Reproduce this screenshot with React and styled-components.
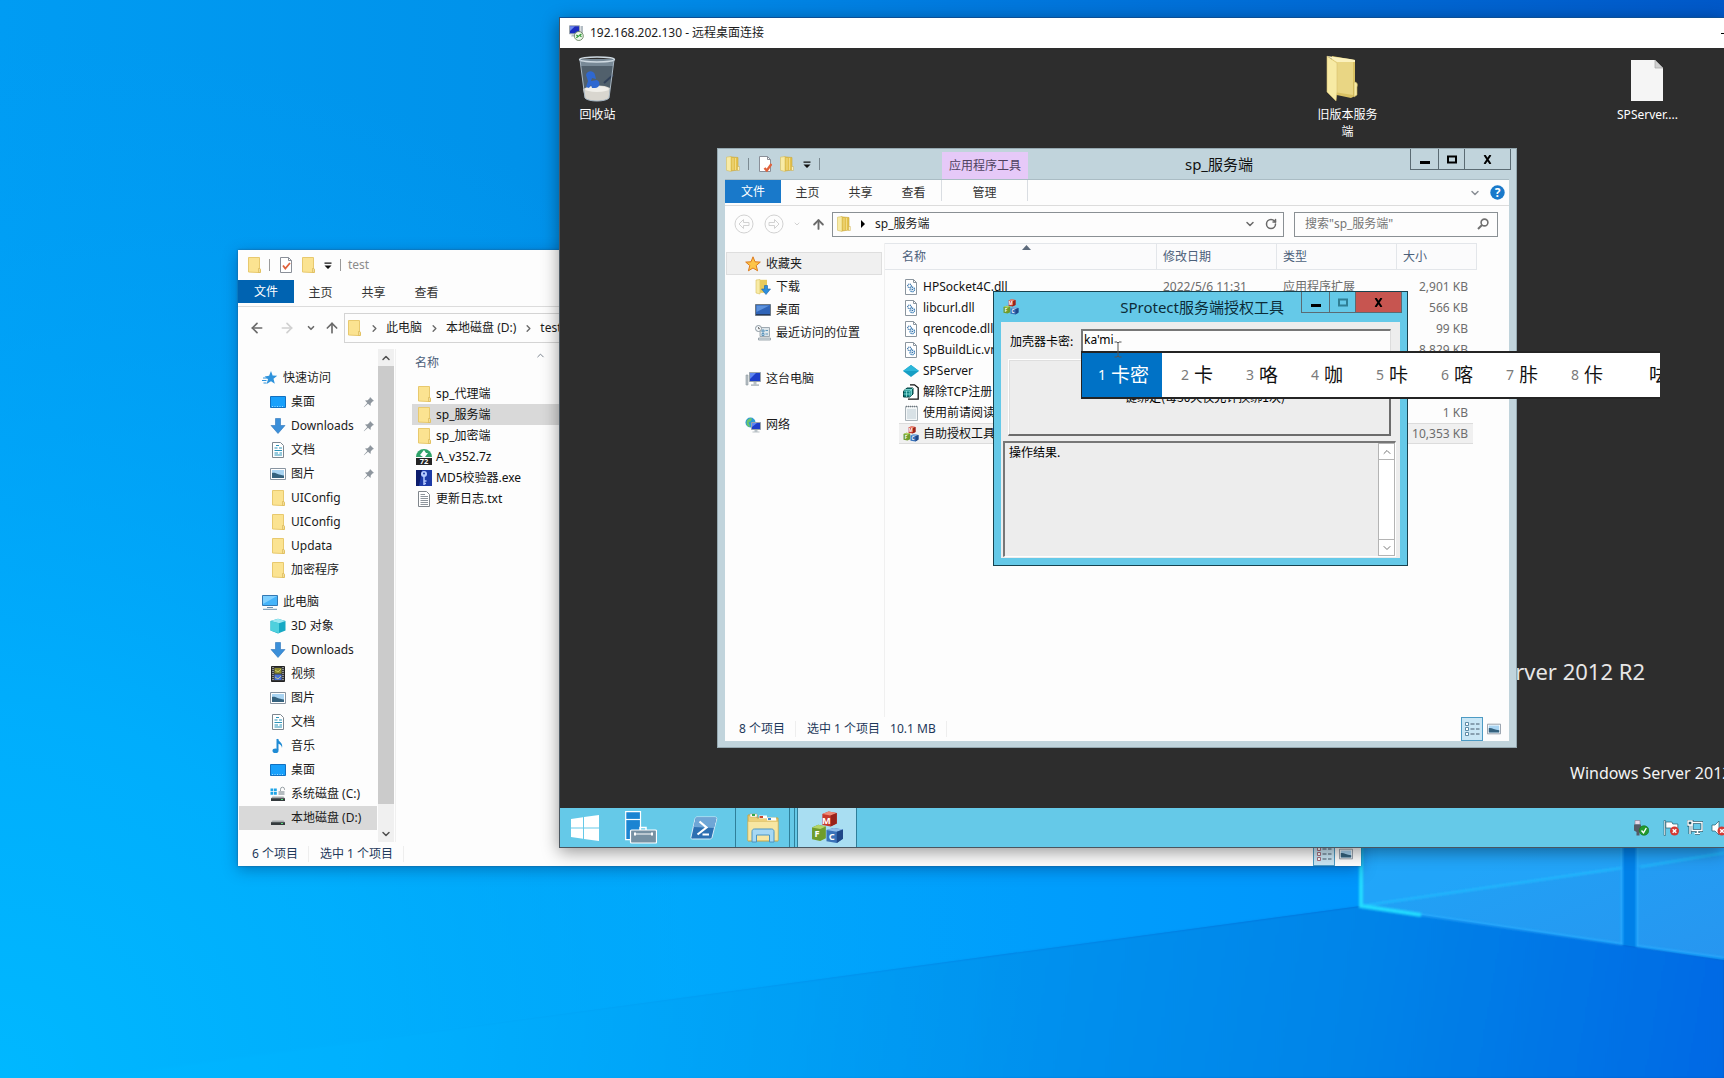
import React from 'react';
import styled, { createGlobalStyle } from 'styled-components';
import {
  ArrowLeft,
  ArrowRight,
  ArrowUp,
  ChevronDown,
  ChevronRight,
  ChevronUp,
  RotateCw,
} from 'lucide-react';

const GlobalStyle = createGlobalStyle`
  * {
    box-sizing: border-box;
  }
  body {
    margin: 0;
    overflow: hidden;
    font-family: 'Noto Sans', 'Noto Sans CJK SC', sans-serif;
    font-size: 12px;
    line-height: 16px;
    color: #1b1b1b;
  }
  button, input, textarea {
    font: inherit;
    color: inherit;
    margin: 0;
  }
  button {
    padding: 0;
    border: 0;
    background: none;
  }
  a {
    color: inherit;
    text-decoration: none;
  }
  svg {
    display: block;
    flex: none;
  }
`;

/* ---------- desktop ---------- */

const Desktop = styled.main`
  position: relative;
  height: 100vh;
  overflow: hidden;
  background: #0095f0;
`;

const WallpaperSvg = styled.svg`
  position: absolute;
  inset: 0;
  width: 100%;
  height: 100%;
`;

const LocalWindow = styled.section`
  position: absolute;
  left: 238px;
  top: 250px;
  width: 1123px;
  height: 616px;
  display: flex;
  flex-direction: column;
  background: #fdfdfd;
  box-shadow: 0 0 2px #1c5a8c, 0 4px 14px rgba(0, 30, 80, 0.35);
`;

const RemoteWindow = styled.section`
  position: absolute;
  left: 559px;
  right: 0;
  top: 17px;
  height: 831px;
  display: flex;
  flex-direction: column;
  border: 1px solid #4a5660;
  border-top-color: #0b4f96;
  border-right: 0;
  box-shadow: 0 4px 16px rgba(0, 0, 0, 0.4);
`;

const RemoteTitle = styled.header`
  display: flex;
  align-items: center;
  gap: 6px;
  height: 30px;
  padding-left: 8px;
  background: #fff;
  overflow: hidden;
`;

const Minimize = styled.button`
  margin-left: auto;
  width: 3px;
  height: 1px;
  background: #000;
`;

const RemoteDesktop = styled.div`
  position: relative;
  flex: 1;
  overflow: hidden;
  background: #2d2d2d;
`;

const IconGrid = styled.div`
  display: grid;
  grid-template-columns: repeat(auto-fill, 75px);
  padding-top: 7px;
`;

const DesktopItem = styled.a`
  grid-column: ${(p) => p.$col};
  display: flex;
  flex-direction: column;
  align-items: center;
  gap: 3px;
  padding: 0 4px;
  color: #fff;
  line-height: 17px;
  text-align: center;
`;

const Brand = styled.div`
  position: absolute;
  right: 79px;
  top: 607px;
  font-size: 22px;
  line-height: 32px;
  color: #e6e6e6;
  white-space: nowrap;
`;

const Edition = styled.div`
  position: absolute;
  left: 1010px;
  top: 714px;
  font-size: 16px;
  line-height: 22px;
  color: #f4f4f4;
  white-space: nowrap;
`;

/* ---------- explorer parts ---------- */

const ServerWindow = styled.section`
  position: absolute;
  left: 157px;
  top: 100px;
  width: 800px;
  height: 600px;
  display: flex;
  flex-direction: column;
  border: 1px solid #95a8b0;
  background: #c1d4dc;
`;

const WindowBody = styled.div`
  flex: 1;
  min-height: 0;
  display: flex;
  flex-direction: column;
  margin: 0 7px 6px;
  background: #fdfdfd;
`;

const TitleBar = styled.header`
  display: flex;
  align-items: center;
  height: 30px;
  padding: ${(p) => p.$pad || '0 5px 0 7px'};
`;

const QuickAccess = styled.div`
  display: flex;
  align-items: center;
  gap: 7px;
  width: ${(p) => p.$w || 'auto'};
  color: #8c8c8c;
`;

const Divider = styled.i`
  width: 1px;
  height: ${(p) => p.$h || 12}px;
  background: ${(p) => p.$c || '#9a9a9a'};
`;

const ContextTab = styled.div`
  align-self: flex-end;
  width: 86px;
  padding: 6px 0 5px;
  text-align: center;
  background: #e6c9f8;
  color: #4f4260;
`;

const WindowName = styled.h1`
  flex: 1;
  margin: 0;
  padding-right: ${(p) => p.$pr || 0}px;
  font-size: 15px;
  font-weight: 400;
  line-height: 20px;
  text-align: ${(p) => p.$align || 'center'};
  color: ${(p) => p.$c || '#111'};
`;

const Caption = styled.div`
  align-self: flex-start;
  display: flex;
  border: 1px solid ${(p) => p.$c || '#5b6b73'};
  border-top: 0;
`;

const CaptionButton = styled.button`
  display: flex;
  align-items: center;
  justify-content: center;
  width: ${(p) => p.$w}px;
  height: 20px;
  background: ${(p) => p.$bg || 'transparent'};

  & + & {
    border-left: 1px solid ${(p) => p.$c || '#5b6b73'};
  }
`;

const Ribbon = styled.div`
  display: flex;
  height: 27px;
  border-bottom: 1px solid #dcdcdc;
  border-top: ${(p) => (p.$top ? '1px solid #aabcc4' : '0')};
  color: #333;
`;

const Tab = styled.button`
  width: ${(p) => p.$w || 53}px;
  height: 25px;
`;

const FileTab = styled(Tab)`
  width: 56px;
  height: 23px;
  color: #fff;
  background: ${(p) => p.$bg};
`;

const ContextRibbonTab = styled(Tab)`
  margin-left: 1px;
  border: solid #d9dde2;
  border-width: 0 1px;
  height: 21px;
  padding-top: 4px;
`;

const RibbonEnd = styled.div`
  display: flex;
  align-items: center;
  gap: 9px;
  margin-left: auto;
  padding-right: 4px;
  color: #8b9096;
`;

const AddressRow = styled.div`
  display: flex;
  align-items: center;
  height: ${(p) => p.$h}px;
  padding: ${(p) => p.$pad};
`;

const NavButton = styled.button`
  display: flex;
  align-items: center;
  justify-content: center;
  width: ${(p) => p.$w}px;
  height: 24px;
  flex: none;
  color: ${(p) => p.$c || '#6a6a6a'};
`;

const AddressBox = styled.div`
  flex: 1;
  display: flex;
  align-items: center;
  height: ${(p) => p.$h}px;
  padding-left: ${(p) => p.$pl}px;
  padding-right: 4px;
  border: 1px solid ${(p) => p.$c};
  white-space: nowrap;
`;

const CrumbSep = styled.span`
  display: flex;
  justify-content: center;
  width: 24px;
  color: #6a6a6a;
`;

const BoxEnd = styled.div`
  display: flex;
  align-items: center;
  gap: 9px;
  margin-left: auto;
  padding-right: 2px;
  color: #6a6a6a;
`;

const SearchBox = styled.label`
  display: flex;
  align-items: center;
  width: 204px;
  height: 25px;
  margin-left: 10px;
  padding: 0 8px 0 10px;
  border: 1px solid #8a9094;
`;

const SearchInput = styled.input`
  flex: 1;
  min-width: 0;
  padding: 0;
  border: 0;
  outline: 0;
  background: transparent;

  &::placeholder {
    color: #757575;
    opacity: 1;
  }
`;

const Panes = styled.div`
  flex: 1;
  min-height: 0;
  display: flex;
`;

const LocalNav = styled.nav`
  width: 140px;
  padding: 17px 1px 0;
  overflow: hidden;
`;

const ServerNav = styled.nav`
  width: 160px;
  padding: 9px 2px 0 1px;
  border-right: 1px solid #f0f0f0;
`;

const NavGroup = styled.div`
  margin-bottom: ${(p) => p.$gap || 0}px;
`;

const NavItem = styled.a`
  display: flex;
  align-items: center;
  gap: 5px;
  height: ${(p) => p.$h}px;
  padding-left: ${(p) => p.$indent}px;
  padding-right: 2px;
  white-space: nowrap;
  background: ${(p) => p.$bg || 'transparent'};
  border: ${(p) => (p.$framed ? '1px solid #dedede' : '0')};

  > svg:last-child:not(:first-child) {
    margin-left: auto;
  }
`;

const Scrollbar = styled.div`
  display: flex;
  flex-direction: column;
  width: 16px;
  background: #f0f0f0;
`;

const ScrollButton = styled.button`
  display: flex;
  align-items: center;
  justify-content: center;
  height: 17px;
  color: #505050;
`;

const Thumb = styled.div`
  flex: 1;
  margin-bottom: 21px;
  background: #cbcbcb;
`;

const FileArea = styled.div`
  flex: 1;
  margin-left: ${(p) => p.$ml || 0}px;
  border-left: ${(p) => (p.$line ? '1px solid #f0f0f0' : '0')};
`;

const FileTable = styled.table`
  table-layout: fixed;
  width: ${(p) => p.$w}px;
  border-spacing: 0;

  tbody::before {
    content: '';
    display: block;
    height: 6px;
  }
`;

const Th = styled.th`
  position: relative;
  height: ${(p) => p.$h || 27}px;
  padding: 0 6px 0 ${(p) => (p.$first ? 3 : 6)}px;
  font-weight: 400;
  text-align: left;
  color: #4c607a;
  background: ${(p) => (p.$flat ? 'transparent' : '#fbfbfc')};
  border: solid #e3e6ea;
  border-width: ${(p) => (p.$flat ? '0' : p.$line ? '1px 1px 1px 0' : '1px 0')};
`;

const SortMark = styled.span`
  position: absolute;
  top: 1px;
  left: 123px;
  color: #6f7884;
`;

const Td = styled.td`
  height: 21px;
  padding: 0 6px;
  white-space: nowrap;
  color: #6d6d6d;
  text-align: ${(p) => p.$align || 'left'};
`;

const SizeTd = styled(Td)`
  padding-right: 5px;
  text-align: right;
`;

const Row = styled.tr`
  td:not(:first-child):not(:last-child) {
    background: ${(p) => p.$bg || 'transparent'};
    box-shadow: ${(p) => (p.$framed ? 'inset 0 1px #dcdcdc, inset 0 -1px #dcdcdc' : 'none')};
  }
`;

const FileLink = styled.a`
  display: flex;
  align-items: center;
  gap: 4px;
  margin-left: -2px;
  color: #111;
`;

const StatusBar = styled.footer`
  display: flex;
  align-items: center;
  height: 24px;
  padding-left: 14px;
  color: #1e395b;
`;

const StatusText = styled.span`
  padding-right: 10px;
  margin-right: ${(p) => (p.$plain ? 0 : 11)}px;
  border-right: ${(p) => (p.$plain ? '0' : '1px solid #eeeeee')};
`;

const ViewButtons = styled.div`
  display: flex;
  align-self: stretch;
  align-items: center;
  margin-left: auto;
  padding-right: 4px;
`;

const ViewButton = styled.button`
  display: flex;
  align-items: center;
  justify-content: center;
  width: 22px;
  height: 24px;
  border: ${(p) => (p.$on ? '1px solid #4d9bc4' : '0')};
  background: ${(p) => (p.$on ? '#c9e6f5' : 'transparent')};
`;

/* ---------- licence dialog ---------- */

const Dialog = styled.section`
  position: absolute;
  left: 433px;
  top: 243px;
  width: 415px;
  height: 275px;
  display: flex;
  flex-direction: column;
  border: 1px solid #17424f;
  background: #65c9e8;
`;

const DialogBody = styled.form`
  flex: 1;
  display: flex;
  flex-direction: column;
  margin: 0 7px 7px;
  background: #ededed;
  font-family: 'Noto Sans CJK SC', sans-serif;
  color: #000;
`;

const Fields = styled.div`
  display: flex;
  flex-direction: column;
  gap: 7px;
  padding: 7px 9px 0 7px;
`;

const Field = styled.label`
  display: flex;
  align-items: center;
  gap: 6px;
  padding-left: 2px;

  span {
    width: 65px;
  }
`;

const KeyInput = styled.input`
  flex: 1;
  min-width: 0;
  height: 23px;
  padding: 0 2px 4px 1px;
  border: 1px solid #777;
  border-width: 2px 1px 1px 2px;
  border-right-color: #dcdcdc;
  border-radius: 0;
  outline: 0;
  background: #fdfdfd;
  font-family: 'Noto Sans', sans-serif;
  text-decoration: underline dashed 1px;
  text-underline-offset: 4px;
`;

const BindButton = styled.button`
  height: 77px;
  padding-left: 12px;
  border: 1px solid #fff;
  border-right: 2px solid #6c6c6c;
  border-bottom: 2px solid #6c6c6c;
  box-shadow: inset 1px 1px #dedede;
`;

const Result = styled.div`
  flex: 1;
  display: flex;
  margin: 5px 4px 1px 2px;
  border: 1px solid #fff;
  border-top: 2px solid #777;
  border-left: 2px solid #777;
`;

const ResultText = styled.textarea`
  flex: 1;
  min-width: 0;
  padding: 1px 4px;
  border: 0;
  outline: 0;
  resize: none;
  overflow: hidden;
  background: transparent;
`;

const ResultScroll = styled.div`
  display: flex;
  flex-direction: column;
  justify-content: space-between;
  width: 17px;
  border: 1px solid #b4b4b4;
  background: #fff;

  button {
    height: 16px;
    color: #777;
  }
  button:first-child {
    border-bottom: 1px solid #b4b4b4;
  }
  button:last-child {
    border-top: 1px solid #b4b4b4;
  }
`;

const Pointer = styled.svg`
  position: absolute;
  left: 554px;
  top: 293px;
`;

const Candidates = styled.div`
  position: absolute;
  left: 521px;
  top: 303px;
  width: 579px;
  height: 48px;
  display: flex;
  border: solid #242424;
  border-width: 2px 0 2px 1px;
  background: #fff;
  overflow: hidden;
`;

const Candidate = styled.button`
  flex: none;
  display: flex;
  align-items: center;
  gap: 5px;
  width: ${(p) => (p.$on ? 80 : 65)}px;
  padding-left: ${(p) => (p.$on ? 16 : 19)}px;
  font-size: 19px;
  line-height: 24px;
  color: ${(p) => (p.$on ? '#fff' : '#111')};
  background: ${(p) => (p.$on ? '#0072c6' : 'transparent')};
  white-space: nowrap;

  small {
    width: 8px;
    font-size: 14px;
    color: ${(p) => (p.$on ? '#fff' : '#7a7a7a')};
  }
`;

/* ---------- taskbar ---------- */

const Taskbar = styled.footer`
  display: flex;
  height: 39px;
  background: #65c9e8;
`;

const TaskButton = styled.button`
  display: flex;
  align-items: center;
  justify-content: center;
  width: ${(p) => p.$w}px;
  background: ${(p) => p.$bg || 'transparent'};
  border: solid #2f7f9a;
  border-width: ${(p) => (p.$open ? '0 1px' : '0')};
`;

const StackEdge = styled.i`
  width: 5px;
  margin-right: 2px;
  border-right: 1px solid #2f7f9a;
`;

const Tray = styled.div`
  display: flex;
  align-items: center;
  gap: 8px;
  width: 91px;
  margin-left: auto;
  overflow: hidden;

  svg:first-child {
    margin-right: 6px;
  }
`;

/* ---------- icons ---------- */

const Svg = ({ s = 16, children }) => (
  <svg width={s} height={s} viewBox="0 0 16 16" fill="none">
    {children}
  </svg>
);

const Folder = () => (
  <Svg>
    <path d="M2.500.5h11v11l1 1v3h-2.500l-9.500-.5z" fill="#fbe391" stroke="#e8c96e" />
    <path d="M12.500 11.500h1.500v4h-1.500z" fill="#fff3c4" stroke="#d9b54f" strokeWidth=".7" />
  </Svg>
);

const OldFolder = () => (
  <Svg>
    <path d="M5 .8 13 1.500v12.500l-7 1z" fill="#e3c14c" stroke="#c9a83c" strokeWidth=".6" />
    <path d="M1.500 1.200 6 .5v15l-4.500-1.200z" fill="#f8eba6" stroke="#d8bf5c" strokeWidth=".6" />
    <path d="M8 2v12M10.500 2v12" stroke="#f2dc86" />
    <path d="M12.500 10.500h1.800v4h-1.800z" fill="#fff5c8" stroke="#c9a83c" strokeWidth=".5" />
  </Svg>
);

const Properties = () => (
  <Svg>
    <path d="M3.500.5h8l3 3v12h-11z" fill="#fff" stroke="#8a8f98" />
    <path d="M11.500.5v3h3" stroke="#8a8f98" />
    <path d="m6 8.500 2.300 3L13 6" stroke="#e0623c" strokeWidth="1.800" />
  </Svg>
);

const OldProperties = () => (
  <Svg>
    <path d="M3.500.5h8l3 3v12h-11z" fill="#fff" stroke="#8a8f98" />
    <path d="M11.500.5v3h3" stroke="#8a8f98" />
    <path d="m8.500 12 2.300 2.500L15.500 8" stroke="#e0623c" strokeWidth="2.400" />
  </Svg>
);

const QuickArrow = () => (
  <svg width="10" height="16" viewBox="0 0 10 16">
    <path d="M1.500 5.500h7v1.200h-7zM1.500 8.500h7L5 12z" fill="#111" />
  </svg>
);

const PinIcon = () => (
  <svg width="12" height="12" viewBox="0 0 12 12">
    <path d="m7 1 4 4-1.200.3-2 2L7.500 10 5 7.700 1 11.200.8 11l3.500-4L2 4.500l2.700-.3 2-2z" fill="#8e969e" />
  </svg>
);

const QuickStar = () => (
  <Svg>
    <path d="m9 1 1.600 4.600 4.600.2-3.700 3 1.300 5L9 11.200 4.600 14l1.400-4.800L2.600 6.400l4.500-.6z" fill="#2f93dc" />
    <path d="M1 8h4M0 10.500h4.500M1.500 13h3" stroke="#2f93dc" />
  </Svg>
);

const DesktopIcon = () => (
  <Svg>
    <path d="M.5 2.500h15v11H.5z" fill="#18a0fb" stroke="#1270c0" />
    <path d="M2 12.500h12" stroke="#9bd8ff" strokeDasharray="1 1.500" />
  </Svg>
);

const OldDesktop = () => (
  <Svg>
    <path d="M.5 2.500h15v11H.5z" fill="#2f64b8" stroke="#6d7884" />
    <path d="M1.500 3.500h13L1.500 10z" fill="#5d92dc" />
    <path d="M1 12.500h14" stroke="#243a5e" />
  </Svg>
);

const DownIcon = () => (
  <Svg>
    <path d="M5.500.5h5v7H15L8 15.500 1 7.500h4.500z" fill="#3b8fd9" stroke="#2b74ba" strokeWidth=".6" />
  </Svg>
);

const DocIcon = () => (
  <Svg>
    <path d="M2.500.5h8l3 3v12h-11z" fill="#fff" stroke="#7d8790" />
    <path d="M4.500 6h3M9 6h3M4.500 8.500h7.500M4.500 11H8M9.500 11H12M4.500 13h7.500M6 3.500h3" stroke="#2c93b8" />
  </Svg>
);

const PictureIcon = () => (
  <Svg>
    <path d="M.5 2.500h15v11H.5z" fill="#fff" stroke="#8894a0" />
    <path d="M2 4h12v8H2z" fill="#a9d4f2" />
    <path d="M2 7c3-1 6 2 12 2.500V12H2z" fill="#35627e" />
  </Svg>
);

const PcIcon = () => (
  <Svg>
    <path d="M.5 1.500h15v10H.5z" fill="#45b4fa" stroke="#3379b4" />
    <path d="m1 2 14 0L1 10z" fill="#7fd0ff" />
    <path d="M5 13.500h6M1 15.300h14" stroke="#6b90ae" />
  </Svg>
);

const CubeIcon = () => (
  <Svg>
    <path d="M8 .8 15.500 3v9.500L8 15.500.5 12.500V3z" fill="#17a9c4" />
    <path d="M8 .8 15.500 3 9 5.200.5 3z" fill="#9be8f2" />
    <path d="M.5 3 9 5.200v10L.5 12.500z" fill="#4fd0dd" />
  </Svg>
);

const VideoIcon = () => (
  <Svg>
    <path d="M1.500.5h13v15h-13z" fill="#36383c" stroke="#222" />
    <path d="M3 1v14M13 1v14" stroke="#e8e8e8" strokeDasharray="1 1" />
    <path d="M4.500 2h7v5.500h-7z" fill="#8c8a30" />
    <path d="M4.500 8.500h7V14h-7z" fill="#4a72d8" />
    <path d="m5 4 3 2 3-3M5 11l3 2 3-3" stroke="#d9dc7a" strokeWidth=".8" />
  </Svg>
);

const MusicIcon = () => (
  <Svg>
    <path d="M7.500 1v11" stroke="#1f8bd4" strokeWidth="2" />
    <ellipse cx="5.500" cy="12.800" rx="3" ry="2.300" fill="#1f8bd4" />
    <path d="M7.500.5c1 3.500 6 4 4.500 9.500-.2-2.500-2-4-4.500-4.500z" fill="#1f8bd4" />
  </Svg>
);

const DriveIcon = ({ system }) => (
  <Svg>
    <path d="M2.500 10.500h11l1.500 2H1z" fill="#a6abae" />
    <path d="M1 12.200h14V15H1z" fill="#343a3d" />
    <path d="M11 13.500h2" stroke="#58e07c" />
    {system && (
      <>
        <path d="M.5 2.500h2.800v2.800H.5zM4 2.500h2.800v2.800H4zM.5 6h2.800v2.800H.5zM4 6h2.800v2.800H4z" fill="#1fa4e6" />
        <path d="M8.500 5h6v4h-6z" fill="#b5bcc0" />
        <path d="M10.500 5V3.200a2 2 0 0 1 4 0V4" stroke="#9aa2a6" />
      </>
    )}
  </Svg>
);

const SevenZip = () => (
  <Svg>
    <path d="M0 8a8 8 0 0 1 16 0z" fill="#2fa36a" />
    <path d="M0 9h16v7H0z" fill="#242424" />
    <path d="m4 6 4-5 2 3h2L9 8H7z" fill="#fff" />
    <text x="8" y="15.300" fontSize="7.500" fontWeight="700" textAnchor="middle" fill="#fff">72</text>
  </Svg>
);

const KeyIcon = () => (
  <Svg>
    <path d="M0 0h16v16H0z" fill="#1d3ba8" />
    <path d="M0 0h6l-3 16H0z" fill="#0c1c6c" />
    <circle cx="8" cy="4" r="3" fill="#b6cbff" />
    <circle cx="8" cy="3.500" r="1" fill="#1d3ba8" />
    <path d="M8 6v9M8 11h2.500M8 13.500h2" stroke="#b6cbff" strokeWidth="1.500" />
  </Svg>
);

const TextIcon = () => (
  <Svg>
    <path d="M2.500.5h8l3 3v12h-11z" fill="#fff" stroke="#80868c" />
    <path d="M4.500 3.500H9M4.500 5.500H12M4.500 7.500H12M4.500 9.500H12M4.500 11.500H12M4.500 13.500H12" stroke="#8e959c" />
  </Svg>
);

const NoteIcon = () => (
  <Svg>
    <path d="M2.500 1.500h12v14h-12z" fill="#f4f7f8" stroke="#a9b2b8" />
    <path d="M3 1.500h12" stroke="#6e767c" strokeWidth="1.500" strokeDasharray="1 1" />
    <path d="M4 5h9M4 7h9M4 9h9M4 11h9M4 13h9" stroke="#bccbd3" />
  </Svg>
);

const DllIcon = () => (
  <Svg>
    <path d="M2.500.5h8l3 3v12h-11z" fill="#fff" stroke="#8b959e" />
    <path d="M10.500.5v3h3" stroke="#8b959e" />
    <circle cx="6.500" cy="6.800" r="1.800" stroke="#2f6da6" strokeDasharray="1 .6" strokeWidth="1.200" />
    <circle cx="9.300" cy="10.500" r="2.200" stroke="#3f80b8" strokeDasharray="1.200 .6" strokeWidth="1.400" />
    <circle cx="9.300" cy="10.500" r=".8" fill="#2f6da6" />
  </Svg>
);

const DiamondIcon = () => (
  <Svg>
    <path d="M8 2 16 8 8 14 0 8z" fill="#169ec4" />
    <path d="M8 2 16 8H0z" fill="#2cb6d9" />
  </Svg>
);

const RegIcon = () => (
  <Svg>
    <path d="M7 .8h4.500l3.700 3v11.400H5" fill="#fff" stroke="#111" strokeWidth="1.300" />
    <path d="M.5 7 4 4h6v6l-3 3H.5z" fill="#0d7f7f" stroke="#063f3f" />
    <path d="M.5 7H7v6M7 7l3-3M3.500 7v6M.5 10H7M2 5.500h6.500v6" stroke="#9ff0ea" strokeWidth=".7" />
  </Svg>
);

const MfcIcon = ({ s = 16 }) => (
  <Svg s={s}>
    <path d="m5.500 1.500 3-1.200 4 .7v5L9.500 7.500l-4-.7z" fill="#c8392c" />
    <path d="m5.500 1.500 3-1.200 4 .7-3 1.200z" fill="#ee8a77" />
    <path d="m9.500 2.200 3-1.200v5l-3 1.500z" fill="#98231b" />
    <path d="m.5 8 3-1.300 3.700.8v5.700l-2.700 1.300-4-.8z" fill="#6f9c2c" />
    <path d="m.5 8 3-1.300 3.700.8-2.700 1.200z" fill="#b3d467" />
    <path d="m7.500 9.200 3.500-1 4.500.8v4.500l-3 2-5-.8z" fill="#3972b9" />
    <path d="m7.500 9.200 3.500-1 4.500.8-3 1z" fill="#90bdea" />
    <path d="m12.500 10 3-1v4.500l-3 2z" fill="#1e4788" />
    <g fill="#fff" fontWeight="700" fontSize="4.500" textAnchor="middle">
      <text x="7.500" y="6.300">M</text>
      <text x="2.900" y="12.700">F</text>
      <text x="10" y="14.300">C</text>
    </g>
  </Svg>
);

const StarIcon = () => (
  <Svg>
    <path d="m8 .8 2 5 5.300.3-4.100 3.400 1.400 5.300L8 12l-4.600 2.800 1.400-5.300L.7 6.100 6 5.800z" fill="#fdc549" stroke="#dc7a1e" />
  </Svg>
);

const DownloadFolder = () => (
  <Svg>
    <path d="M1 1 5 .5v14.500L1 14z" fill="#f8eba6" stroke="#d8bf5c" strokeWidth=".6" />
    <path d="M5 .8h7v13H5z" fill="#e8cb5c" />
    <path d="M9.500 6.500h3V10h3L11 15.500 6.500 10h3z" fill="#2c8fdd" stroke="#1a62a8" strokeWidth=".6" />
  </Svg>
);

const RecentIcon = () => (
  <Svg>
    <path d="M5 2.500h9.500v9H5zM3.500 13h12v2h-12z" fill="#dce5ea" stroke="#8b979f" strokeWidth=".8" />
    <path d="M7 5h2v2H7zM7 8.500h2v2H7zM10.500 5.500H13M10.500 9H13" stroke="#4385b4" strokeWidth=".8" />
    <circle cx="3.500" cy="3.500" r="3" fill="#f4f7f9" stroke="#8b979f" />
    <path d="M3.500 2v1.700H5" stroke="#555" strokeWidth=".8" />
  </Svg>
);

const OldPc = () => (
  <Svg>
    <path d="M1 4h2v10H1z" fill="#b9c1c6" stroke="#8b979f" strokeWidth=".6" />
    <path d="M4.500 1.500h11v9h-11z" fill="#1d3ec9" stroke="#9aa4ab" />
    <path d="M5 2h6L5 8z" fill="#5e86f2" />
    <path d="M8.500 11h3v2.500h-3zM6 13.300h8V15H6z" fill="#b9c1c6" />
  </Svg>
);

const NetworkIcon = () => (
  <Svg>
    <circle cx="5.500" cy="5.500" r="5" fill="#2b9ad6" />
    <path d="M2 3.500c2-2.500 4-2.500 5-2L6 4 3.500 5.500 5 9l-1 1.200C1.500 9 1 6 2 3.500z" fill="#6bc56a" />
    <path d="M6.500 5.500h9v7h-9z" fill="#1d3ec9" stroke="#9aa4ab" />
    <path d="M7 6h5l-5 4z" fill="#5e86f2" />
    <path d="M9.500 13h3v1.500h2v1h-7v-1h2z" fill="#b9c1c6" />
  </Svg>
);

const RdpIcon = () => (
  <Svg>
    <path d="M1.500.8h10v8h-10z" fill="#1c2cc0" stroke="#9ba4ae" />
    <path d="M2 1.300h5L2 6z" fill="#6b86ec" />
    <path d="M12.500 1h2.500v9h-2.500zM4 9.500h5v2H3z" fill="#b4bdc4" />
    <circle cx="10.800" cy="11" r="4.500" fill="#eef6ea" stroke="#5d7a55" strokeWidth=".8" />
    <path d="m8.300 10 2 1.300-2 1.400M13.500 9l-2 1.300 2 1.500" stroke="#2f9a35" strokeWidth="1.200" />
  </Svg>
);

const DetailsIcon = ({ c = '#4f7f9c' }) => (
  <Svg>
    <path d="M1.500 1.500h3v3h-3zM1.500 6.500h3v3h-3zM1.500 11.500h3v3h-3z" fill="#fff" stroke={c} strokeWidth=".9" />
    <path d="M6.500 3h4M12 3h3.500M6.500 8h4M12 8h3.500M6.500 13h4M12 13h3.500" stroke="#46586a" />
  </Svg>
);

const Wallpaper = () => (
  <WallpaperSvg viewBox="0 0 1724 1078" preserveAspectRatio="none" aria-hidden="true">
    <defs>
      <linearGradient id="base" x1="0" y1="0" x2="1" y2="0">
        <stop offset="0" stopColor="#009cf3" />
        <stop offset=".3" stopColor="#0092ea" />
        <stop offset=".55" stopColor="#007ade" />
        <stop offset="1" stopColor="#0058c8" />
      </linearGradient>
      <radialGradient id="glow" gradientUnits="userSpaceOnUse" cx="0" cy="1078" r="1050">
        <stop offset="0" stopColor="#00b8ff" />
        <stop offset=".35" stopColor="#00b2ff" stopOpacity=".8" />
        <stop offset="1" stopColor="#00a4fa" stopOpacity="0" />
      </radialGradient>
      <linearGradient id="beam" x1="0" y1="0" x2="1" y2="0">
        <stop offset="0" stopColor="#00aefa" stopOpacity="0" />
        <stop offset=".5" stopColor="#00a6fc" />
        <stop offset="1" stopColor="#0096fc" />
      </linearGradient>
      <linearGradient id="floor" gradientUnits="userSpaceOnUse" x1="200" y1="900" x2="1724" y2="1160">
        <stop offset="0" stopColor="#00b0fc" />
        <stop offset=".4" stopColor="#009af2" />
        <stop offset=".75" stopColor="#0084e8" />
        <stop offset="1" stopColor="#0068e4" />
      </linearGradient>
      <linearGradient id="pane" x1="0" y1="0" x2="1" y2="1">
        <stop offset="0" stopColor="#1ea6f8" />
        <stop offset="1" stopColor="#2796f0" />
      </linearGradient>
      <filter id="soft" x="-10%" y="-10%" width="120%" height="120%">
        <feGaussianBlur stdDeviation="1" />
      </filter>
    </defs>
    <path d="M0 0h1724v1078H0z" fill="url(#base)" />
    <path d="M0 800h1361v106L0 1090z" fill="url(#beam)" />
    <path d="M0 1090 1361 906l363 54v118H0z" fill="url(#floor)" filter="url(#soft)" />
    <path d="M0 0h1724v1078H0z" fill="url(#glow)" />
    <path d="M1361 800h363v160l-363-54z" fill="#0080e8" />
    <path d="M1361 800h261v144l-261-38zM1637 800h87v158l-87-12z" fill="url(#pane)" />
    <path d="M1361 800h261v68l-261 38zM1637 800h87v53l-87 14z" fill="#22acff" opacity=".4" />
    <g fill="none" filter="url(#soft)">
      <path d="m1361 906 261-38M1640 867l84-14" stroke="#22bcff" strokeWidth="2" />
      <path d="m1361 906 261 38v-150M1724 958l-87-12V800" stroke="#29acff" strokeWidth="2" />
      <path d="M1361 800v106l60 9" stroke="#24dcff" strokeWidth="4" />
    </g>
  </WallpaperSvg>
);

const captionGlyphs = (muted) => ({
  min: <svg width="10" height="10"><path d="M0 7h10v3H0z" fill="#000" /></svg>,
  max: (
    <svg width="10" height="9">
      <path d="M1 1.500h8v6H1z" fill="none" stroke={muted ? '#2f7f95' : '#000'} strokeWidth="2" />
    </svg>
  ),
  close: (
    <svg width="9" height="9">
      <path d="m1.500 0 6 9M7.500 0l-6 9" stroke="#000" strokeWidth="2" />
    </svg>
  ),
});

const CaptionButtons = ({ muted, closeBg }) => {
  const glyph = captionGlyphs(muted);
  return (
    <Caption>
      <CaptionButton $w={27} aria-label="最小化">{glyph.min}</CaptionButton>
      <CaptionButton $w={26} aria-label="最大化">{glyph.max}</CaptionButton>
      <CaptionButton $w={46} $bg={closeBg} aria-label="关闭">{glyph.close}</CaptionButton>
    </Caption>
  );
};

/* ---------- data ---------- */

const quickAccess = [
  ['桌面', DesktopIcon, true],
  ['Downloads', DownIcon, true],
  ['文档', DocIcon, true],
  ['图片', PictureIcon, true],
  ['UIConfig', Folder],
  ['UIConfig', Folder],
  ['Updata', Folder],
  ['加密程序', Folder],
];

const thisPc = [
  ['3D 对象', CubeIcon],
  ['Downloads', DownIcon],
  ['视频', VideoIcon],
  ['图片', PictureIcon],
  ['文档', DocIcon],
  ['音乐', MusicIcon],
  ['桌面', DesktopIcon],
];

const localFiles = [
  ['sp_代理端', Folder],
  ['sp_服务端', Folder, true],
  ['sp_加密端', Folder],
  ['A_v352.7z', SevenZip],
  ['MD5校验器.exe', KeyIcon],
  ['更新日志.txt', TextIcon],
];

const serverFiles = [
  { name: 'HPSocket4C.dll', icon: DllIcon, date: '2022/5/6 11:31', type: '应用程序扩展', size: '2,901 KB' },
  { name: 'libcurl.dll', icon: DllIcon, size: '566 KB' },
  { name: 'qrencode.dll', icon: DllIcon, size: '99 KB' },
  { name: 'SpBuildLic.vmp', icon: DllIcon, size: '8,829 KB' },
  { name: 'SPServer', icon: DiamondIcon },
  { name: '解除TCP注册', icon: RegIcon },
  { name: '使用前请阅读', icon: NoteIcon, size: '1 KB' },
  { name: '自助授权工具', icon: MfcIcon, size: '10,353 KB', selected: true },
];

const candidates = ['卡密', '卡', '咯', '咖', '咔', '喀', '胩', '佧'];

/* ---------- windows ---------- */

const LocalExplorer = () => (
  <LocalWindow>
    <TitleBar $pad="0 8px">
      <QuickAccess>
        <Folder />
        <Divider />
        <Properties />
        <Folder />
        <QuickArrow />
        <Divider />
        <span>test</span>
      </QuickAccess>
    </TitleBar>
    <Ribbon>
      <FileTab $bg="#0063b1">文件</FileTab>
      <Tab>主页</Tab>
      <Tab>共享</Tab>
      <Tab>查看</Tab>
    </Ribbon>
    <AddressRow $h={42} $pad="0 12px 0 4px">
      <NavButton $w={30} aria-label="后退"><ArrowLeft size={16} strokeWidth={2.5} /></NavButton>
      <NavButton $w={30} $c="#d0d0d0" aria-label="前进"><ArrowRight size={16} strokeWidth={2.5} /></NavButton>
      <NavButton $w={18} aria-label="最近"><ChevronDown size={10} strokeWidth={4} /></NavButton>
      <NavButton $w={24} aria-label="上移"><ArrowUp size={16} strokeWidth={2.5} /></NavButton>
      <AddressBox $h={30} $c="#d4d4d4" $pl={1}>
        <Folder />
        <CrumbSep><ChevronRight size={11} strokeWidth={3} /></CrumbSep>
        <span>此电脑</span>
        <CrumbSep><ChevronRight size={11} strokeWidth={3} /></CrumbSep>
        <span>本地磁盘 (D:)</span>
        <CrumbSep><ChevronRight size={11} strokeWidth={3} /></CrumbSep>
        <span>test</span>
      </AddressBox>
    </AddressRow>
    <Panes>
      <LocalNav>
        <NavGroup $gap={8}>
          <NavItem href="#" $h={24} $indent={23}><QuickStar />快速访问</NavItem>
          {quickAccess.map(([name, Icon, pinned], i) => (
            <NavItem href="#" key={i} $h={24} $indent={31}>
              <Icon />
              {name}
              {pinned && <PinIcon />}
            </NavItem>
          ))}
        </NavGroup>
        <NavGroup>
          <NavItem href="#" $h={24} $indent={23}><PcIcon />此电脑</NavItem>
          {thisPc.map(([name, Icon]) => (
            <NavItem href="#" key={name} $h={24} $indent={31}><Icon />{name}</NavItem>
          ))}
          <NavItem href="#" $h={24} $indent={31}><DriveIcon system />系统磁盘 (C:)</NavItem>
          <NavItem href="#" $h={24} $indent={31} $bg="#d9d9d9"><DriveIcon />本地磁盘 (D:)</NavItem>
        </NavGroup>
      </LocalNav>
      <Scrollbar>
        <ScrollButton aria-label="向上滚动"><ChevronUp size={12} strokeWidth={3} /></ScrollButton>
        <Thumb />
        <ScrollButton aria-label="向下滚动"><ChevronDown size={12} strokeWidth={3} /></ScrollButton>
      </Scrollbar>
      <FileArea $ml={1} $line>
        <FileTable $w={400}>
          <colgroup>
            <col width="16" />
            <col width="250" />
            <col />
          </colgroup>
          <thead>
            <tr>
              <Th $flat $h={28} />
              <Th $flat $first>
                名称
                <SortMark><ChevronUp size={11} strokeWidth={2} /></SortMark>
              </Th>
              <Th $flat />
            </tr>
          </thead>
          <tbody>
            {localFiles.map(([name, Icon, selected]) => (
              <Row key={name} $bg={selected && '#d9d9d9'}>
                <Td />
                <Td><FileLink href="#"><Icon />{name}</FileLink></Td>
                <Td />
              </Row>
            ))}
          </tbody>
        </FileTable>
      </FileArea>
    </Panes>
    <StatusBar>
      <StatusText>6 个项目</StatusText>
      <StatusText>选中 1 个项目</StatusText>
      <ViewButtons>
        <ViewButton $on aria-label="详细信息"><DetailsIcon c="#a06070" /></ViewButton>
        <ViewButton aria-label="大图标"><Svg s={14}><PictureIcon /></Svg></ViewButton>
      </ViewButtons>
    </StatusBar>
  </LocalWindow>
);

const ServerExplorer = () => (
  <ServerWindow>
    <TitleBar>
      <QuickAccess $w="217px">
        <OldFolder />
        <Divider $c="#7b8a92" />
        <OldProperties />
        <OldFolder />
        <QuickArrow />
        <Divider $c="#7b8a92" />
      </QuickAccess>
      <ContextTab>应用程序工具</ContextTab>
      <WindowName>sp_服务端</WindowName>
      <CaptionButtons />
    </TitleBar>
    <WindowBody>
      <Ribbon $top>
        <FileTab $bg="#1979ca">文件</FileTab>
        <Tab>主页</Tab>
        <Tab>共享</Tab>
        <Tab>查看</Tab>
        <ContextRibbonTab $w={87}>管理</ContextRibbonTab>
        <RibbonEnd>
          <ChevronDown size={12} strokeWidth={3} />
          <svg width="15" height="15" viewBox="0 0 15 15">
            <circle cx="7.500" cy="7.500" r="7.200" fill="#1979ca" />
            <text x="7.500" y="11.800" fontSize="12" fontWeight="700" textAnchor="middle" fill="#fff">?</text>
          </svg>
        </RibbonEnd>
      </Ribbon>
      <AddressRow $h={37} $pad="0 11px 1px 4px">
        <NavButton $w={30} $c="#d2d2d2" aria-label="后退">
          <svg width="20" height="20" viewBox="0 0 20 20" fill="none" stroke="currentColor">
            <circle cx="10" cy="10" r="9" />
            <path d="m9.500 5.500-4.500 4.500 4.500 4.500v-3H15v-3H9.500z" />
          </svg>
        </NavButton>
        <NavButton $w={30} $c="#d2d2d2" aria-label="前进">
          <svg width="20" height="20" viewBox="0 0 20 20" fill="none" stroke="currentColor">
            <circle cx="10" cy="10" r="9" />
            <path d="m10.500 5.500 4.500 4.500-4.500 4.500v-3H5v-3h5.500z" />
          </svg>
        </NavButton>
        <NavButton $w={16} $c="#d2d2d2" aria-label="最近"><ChevronDown size={8} strokeWidth={3} /></NavButton>
        <NavButton $w={27} aria-label="上移"><ArrowUp size={15} strokeWidth={3} /></NavButton>
        <AddressBox $h={25} $c="#8a9094" $pl={3}>
          <OldFolder />
          <svg width="23" height="10" viewBox="0 0 23 10"><path d="m9 1 4 4-4 4z" fill="#000" /></svg>
          <span>sp_服务端</span>
          <BoxEnd>
            <ChevronDown size={12} strokeWidth={3} />
            <RotateCw size={12} strokeWidth={3} />
          </BoxEnd>
        </AddressBox>
        <SearchBox>
          <SearchInput placeholder={'搜索"sp_服务端"'} aria-label="搜索" />
          <svg width="12" height="12" viewBox="0 0 12 12" fill="none" stroke="#707070" strokeWidth="1.600">
            <circle cx="7.500" cy="4.500" r="3.400" />
            <path d="M5 7 1 11" strokeWidth="2" />
          </svg>
        </SearchBox>
      </AddressRow>
      <Panes>
        <ServerNav>
          <NavGroup $gap={23}>
            <NavItem href="#" $h={23} $indent={18} $bg="#f0f0f0" $framed><StarIcon />收藏夹</NavItem>
            <NavItem href="#" $h={23} $indent={29}><DownloadFolder />下载</NavItem>
            <NavItem href="#" $h={23} $indent={29}><OldDesktop />桌面</NavItem>
            <NavItem href="#" $h={23} $indent={29}><RecentIcon />最近访问的位置</NavItem>
          </NavGroup>
          <NavGroup $gap={23}>
            <NavItem href="#" $h={23} $indent={19}><OldPc />这台电脑</NavItem>
          </NavGroup>
          <NavItem href="#" $h={23} $indent={19}><NetworkIcon />网络</NavItem>
        </ServerNav>
        <FileArea>
          <FileTable $w={592}>
            <colgroup>
              <col width="14" />
              <col width="258" />
              <col width="120" />
              <col width="120" />
              <col width="76" />
              <col width="4" />
            </colgroup>
            <thead>
              <tr>
                <Th />
                <Th $line $first>
                  名称
                  <SortMark>
                    <svg width="9" height="5"><path d="M0 5 4.500 0 9 5z" fill="#5d6b7c" /></svg>
                  </SortMark>
                </Th>
                <Th $line>修改日期</Th>
                <Th $line>类型</Th>
                <Th>大小</Th>
                <Th $line />
              </tr>
            </thead>
            <tbody>
              {serverFiles.map(({ name, icon: Icon, date, type, size, selected }) => (
                <Row key={name} $bg={selected && '#f0f0f0'} $framed={selected}>
                  <Td />
                  <Td><FileLink href="#"><Icon />{name}</FileLink></Td>
                  <Td>{date}</Td>
                  <Td>{type}</Td>
                  <SizeTd>{size}</SizeTd>
                  <Td />
                </Row>
              ))}
            </tbody>
          </FileTable>
        </FileArea>
      </Panes>
      <StatusBar>
        <StatusText>8 个项目</StatusText>
        <StatusText $plain>选中 1 个项目</StatusText>
        <StatusText>10.1 MB</StatusText>
        <ViewButtons>
          <ViewButton $on aria-label="详细信息"><DetailsIcon /></ViewButton>
          <ViewButton aria-label="大图标"><Svg s={14}><PictureIcon /></Svg></ViewButton>
        </ViewButtons>
      </StatusBar>
    </WindowBody>
  </ServerWindow>
);

const LicenseDialog = () => (
  <Dialog role="dialog" aria-label="SProtect服务端授权工具">
    <TitleBar $pad="0 5px 0 9px">
      <MfcIcon />
      <WindowName $c="#0c2c38" $align="right" $pr={17}>SProtect服务端授权工具</WindowName>
      <CaptionButtons muted closeBg="#c75550" />
    </TitleBar>
    <DialogBody onSubmit={(e) => e.preventDefault()}>
      <Fields>
        <Field>
          <span>加壳器卡密:</span>
          <KeyInput defaultValue="ka'mi" />
        </Field>
        <BindButton type="button">键绑定(每30天仅允许换绑1次)</BindButton>
      </Fields>
      <Result>
        <ResultText aria-label="操作结果" readOnly defaultValue="操作结果." />
        <ResultScroll>
          <ScrollButton type="button" aria-label="向上滚动"><ChevronUp size={12} /></ScrollButton>
          <ScrollButton type="button" aria-label="向下滚动"><ChevronDown size={12} /></ScrollButton>
        </ResultScroll>
      </Result>
    </DialogBody>
  </Dialog>
);

const RecycleBin = () => (
  <svg width="40" height="48" viewBox="1 0 40 48" fill="none">
    <path d="M3 4h34l-5 39c-1 4-23 4-24 0z" fill="#5d7182" opacity=".75" />
    <path d="M3 4h34l-1 7H4z" fill="#9fb2c0" opacity=".5" />
    <path d="M6 34c7-4 20-5 27-1l-1 10c-4 4-20 4-24 0z" fill="#d9d6cf" />
    <ellipse cx="20" cy="34" rx="12" ry="3" fill="#f1efea" />
    <path d="M9 20c1-5 8-5 9 0l1 4-4-1-1 3 6-1c4 2 3 8-2 8h-3l-1-3-2 3-3-1 2-6-1-3z" fill="#2f68d0" />
    <path d="m27 28 9-8" stroke="#31415a" strokeWidth="2" />
    <ellipse cx="20" cy="4.500" rx="17.500" ry="2.500" stroke="#cfdae2" strokeWidth="1.300" />
    <path d="m3 5 5 38c3 4 21 4 24 0l5-38" stroke="#a9b8c4" />
  </svg>
);

const BigFolder = () => (
  <svg width="44" height="48" viewBox="6 0 44 48">
    <path d="m12 1 23 4v36l-4 2-19-4z" fill="#d9c163" />
    <path d="m14 3 19 3v34l-19-3z" fill="#e9d684" />
    <path d="m7 1 10 7v29l-1 9L7 37z" fill="#f7eaa4" stroke="#d8c170" strokeWidth=".6" />
    <path d="m7 1 23 3 5 1v2L17 7z" fill="#fbf1bd" />
    <path d="M34 27c3 0 4 2 3 5v8l-3 2z" fill="#f7eaa4" stroke="#c4ac54" strokeWidth=".6" />
  </svg>
);

const BlankFile = () => (
  <svg width="34" height="48" viewBox="1 0 34 48">
    <path d="M1 5h24l8 8v33H1z" fill="#f5f5f5" />
    <path d="M25 5v8h8z" fill="#cfcfcf" stroke="#a4a4a4" strokeWidth=".7" />
  </svg>
);

const RemoteTaskbar = () => (
  <Taskbar>
    <TaskButton $w={50} aria-label="开始">
      <svg width="28" height="26" viewBox="0 0 28 26" fill="#fff">
        <path d="M0 4 12 2.200v10.300H0zM13 2l15-2v12.500H13zM0 13.500h12v10.300L0 22zM13 13.500h15V26l-15-2z" />
      </svg>
    </TaskButton>
    <TaskButton $w={62} aria-label="服务器管理器">
      <svg width="32" height="33" viewBox="0 0 32 33" fill="none" stroke="#fff">
        <path d="M.7.7h14.800v28H.7z" fill="#1b84d2" strokeWidth="1.200" />
        <path d="M1 8.500h14" strokeWidth="1.200" />
        <path d="M15 19v-2.500h6V19" strokeWidth="1.500" />
        <rect x="5.500" y="19" width="26" height="13" rx="1" fill="#7791a3" strokeWidth="1.200" />
        <path d="M9 23h19" />
        <path d="M9 21.500h2v3H9zM26 21.500h2v3h-2z" fill="#fff" stroke="none" />
      </svg>
    </TaskButton>
    <TaskButton $w={63} aria-label="PowerShell">
      <svg width="28" height="24" viewBox="0 0 28 24" fill="none">
        <path d="M7 1h18c1.500 0 2 1 1.700 2l-4.500 18c-.3 1.300-1 2-2.500 2H2.500C1 23 .7 22 1 21L5 3c.3-1.300 1-2 2-2z" fill="#2c6fb2" stroke="#d6ebf8" />
        <path d="M7 1.500h18c1 0 1.500.5 1.200 1.500L24 12 3.500 11 5.500 3c.2-1 .7-1.500 1.500-1.500z" fill="#6fa6d6" />
        <path d="m9.500 5.500 7 6-9 7M12.500 18.500H19" stroke="#fff" strokeWidth="2.200" />
      </svg>
    </TaskButton>
    <TaskButton $w={55} $open aria-label="文件资源管理器">
      <svg width="32" height="30" viewBox="0 0 32 30">
        <path d="M1 2h9v3h21v23H1z" fill="#ecd07a" stroke="#c9a545" />
        <path d="M3 1h7v3H3z" fill="#fff" stroke="#b9a56a" strokeWidth=".5" />
        <path d="M5 1h3v2H5z" fill="#35a84a" />
        <path d="M12 2.500h8v3h-8z" fill="#fff" />
        <path d="M12.500 3h3.500v2h-3.500z" fill="#c9452e" />
        <path d="M20 4.500h9v3h-9z" fill="#fff" />
        <path d="M21 5h3v2h-3z" fill="#3c89d0" />
        <path d="M1 8.500h30v19H1z" fill="#f7e6a2" stroke="#dcbf66" strokeWidth=".6" />
        <path d="M5 29V18.500c0-1.500 1-2.500 2.500-2.500h17c1.500 0 2.500 1 2.500 2.500V29h-4.500v-7h-13v7z" fill="#a6d8f4" stroke="#4a94c2" />
      </svg>
    </TaskButton>
    <StackEdge />
    <TaskButton $w={60} $open $bg="#a9def2" aria-label="SProtect服务端授权工具">
      <MfcIcon s={33} />
    </TaskButton>
    <Tray>
      <Svg>
        <path d="M2 .5h5v4H2z" fill="#e7d9ea" stroke="#8a7c90" strokeWidth=".6" />
        <path d="M1 4.500h7v6L6.500 12v3.500h-3V12L1 10.500z" fill="#565a66" />
        <circle cx="11" cy="10.500" r="4.800" fill="#239a2e" stroke="#14701d" strokeWidth=".6" />
        <path d="m8.500 10.500 2 2.300L13.300 8" stroke="#fff" strokeWidth="1.400" />
      </Svg>
      <Svg>
        <path d="M1 .5h1.500v15H1z" fill="#fff" stroke="#245a6c" strokeWidth=".6" />
        <path d="M2.800 2h6l1 2h5v6h-6l-1-2h-5z" fill="#fff" stroke="#245a6c" strokeWidth=".7" />
        <circle cx="11.500" cy="11" r="4.500" fill="#d33a34" />
        <path d="m9.700 9.200 3.600 3.600M13.300 9.200l-3.600 3.600" stroke="#fff" strokeWidth="1.500" />
      </Svg>
      <Svg>
        <path d="M5 2.500h10v8H5zM8 13.500h5M10.500 11v2M1 1h4v4H1zM3 5v9" stroke="#245a6c" strokeWidth="3" />
        <path d="M5 2.500h10v8H5zM7.500 13.500H13M10.500 11v2" stroke="#fff" strokeWidth="1.400" />
        <path d="M1 1h4v4H1zM3 5v9" fill="#245a6c" stroke="#fff" strokeWidth="1.400" />
      </Svg>
      <Svg>
        <path d="M1 5h3l4-4v14l-4-4H1z" fill="#fff" stroke="#245a6c" strokeWidth=".7" />
        <circle cx="11" cy="11" r="4.500" fill="#d33a34" />
        <path d="m9.200 9.200 3.600 3.600M12.800 9.200l-3.600 3.600" stroke="#fff" strokeWidth="1.500" />
      </Svg>
    </Tray>
  </Taskbar>
);

const RemoteSession = () => (
  <RemoteWindow>
    <RemoteTitle>
      <RdpIcon />
      <span>192.168.202.130 - 远程桌面连接</span>
      <Minimize aria-label="最小化" />
    </RemoteTitle>
    <RemoteDesktop>
      <IconGrid>
        <DesktopItem href="#" $col={1}><RecycleBin />回收站</DesktopItem>
        <DesktopItem href="#" $col={11}><BigFolder />旧版本服务端</DesktopItem>
        <DesktopItem href="#" $col={15}><BlankFile />SPServer....</DesktopItem>
      </IconGrid>
      <Brand>Windows Server 2012 R2</Brand>
      <Edition>Windows Server 2012</Edition>
      <ServerExplorer />
      <LicenseDialog />
      <Candidates>
        {candidates.map((word, i) => (
          <Candidate key={word} $on={i === 0}>
            <small>{i + 1}</small>
            {word}
          </Candidate>
        ))}
        <Candidate><small />呿</Candidate>
      </Candidates>
      <Pointer width="8" height="17" viewBox="0 0 8 17" fill="none" stroke="#555">
        <path d="M.5 1h2.500l1 1 1-1h2.500M4 2v13M.5 16h2.500l1-1 1 1h2.500" />
      </Pointer>
    </RemoteDesktop>
    <RemoteTaskbar />
  </RemoteWindow>
);

const App = () => (
  <>
    <GlobalStyle />
    <Desktop>
      <Wallpaper />
      <LocalExplorer />
      <RemoteSession />
    </Desktop>
  </>
);

export default App;
